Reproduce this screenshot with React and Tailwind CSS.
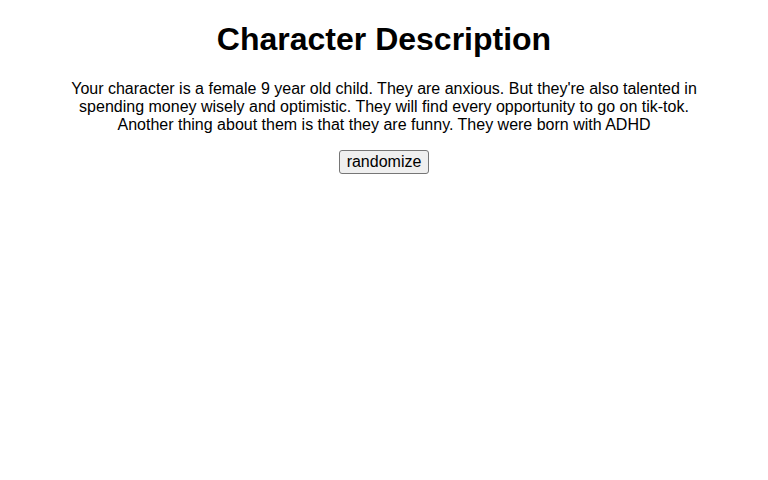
export default function App() {
  return (
    <div className="px-2 text-center text-black bg-white min-h-[480px] font-['Liberation_Sans',Arial,sans-serif]">
      <h1 className="pt-[21px] mb-[22px] text-[32px] leading-[37px] font-bold">
        Character Description
      </h1>
      <p className="max-w-[650px] mx-auto text-base leading-[18px] mb-4">
        Your character is a female 9 year old child. They are anxious. But they're also talented in
        spending money wisely and optimistic. They will find every opportunity to go on tik-tok.
        Another thing about them is that they are funny. They were born with ADHD
      </p>
      <button className="px-[7px] py-[3px] text-base leading-[16px] bg-[#efefef] border border-[#767676] rounded-[3px]">
        randomize
      </button>
    </div>
  );
}
